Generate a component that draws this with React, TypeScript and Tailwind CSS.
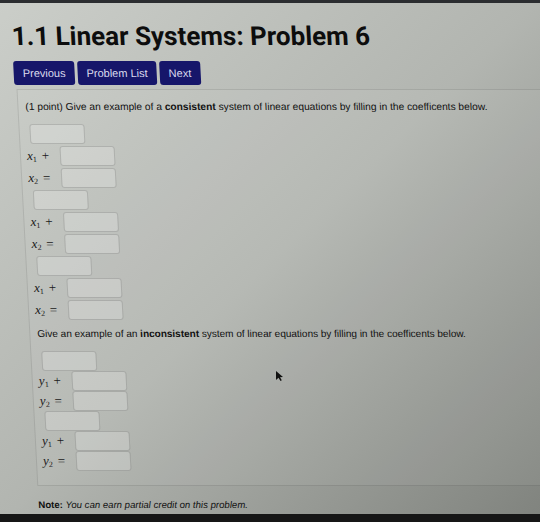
import React from 'react';

type Row = { kind: 'box' } | { kind: 'eq'; sub: string; op: string };

function Box() {
  return <div className="h-[20px] w-[55px] rounded-[3px] border border-black/15 bg-white/20" />;
}

function EqRow({ v, sub, op }: { v: string; sub: string; op: string }) {
  return (
    <div className="flex items-center">
      <div className="w-[33px] shrink-0 font-['Liberation_Serif',serif] text-[13px] text-[#1a1a1a]">
        <span className="italic">{v}</span>
        <sub className="text-[8px]">{sub}</sub>
        <span className="ml-[5px]">{op}</span>
      </div>
      <Box />
    </div>
  );
}

function System({ v, groups, gap }: { v: string; groups: number; gap: string }) {
  const rows: Row[] = [];
  for (let g = 0; g < groups; g++) {
    rows.push({ kind: 'box' }, { kind: 'eq', sub: '1', op: '+' }, { kind: 'eq', sub: '2', op: '=' });
  }
  return (
    <div className={`flex flex-col ${gap}`}>
      {rows.map((r, i) =>
        r.kind === 'box' ? (
          <div key={i} className="pl-[4px]">
            <Box />
          </div>
        ) : (
          <EqRow key={i} v={v} sub={r.sub} op={r.op} />
        )
      )}
    </div>
  );
}

export default function App() {
  return (
    <div className="relative flex h-[522px] w-[540px] flex-col overflow-hidden bg-linear-to-br from-[#cbcec9] via-[#b2b5b0] to-[#80837e] font-['Liberation_Sans',Arial,sans-serif] text-[#111]">
      <div className="h-[3px] bg-[#2b2d30]" />
      <div className="origin-top-left skew-x-3 pl-[10px]">
        <h1 className="pt-[18px] font-['Roboto',Arial,sans-serif] text-[26px] font-bold leading-[30px] text-[#0d0d0d]">
          1.1 Linear Systems: Problem 6
        </h1>
        <div className="mt-[10px] flex gap-[3px]">
          {['Previous', 'Problem List', 'Next'].map((b) => (
            <button
              key={b}
              className="h-[24px] rounded-[3px] bg-[#16166a] px-[9px] text-[11px] text-[#dcdcee]"
            >
              {b}
            </button>
          ))}
        </div>
        <div className="ml-[2px] mt-[4px] border border-black/10 bg-white/5 pb-[14px] pl-[6px] pt-[11px]">
          <p className="pl-[1px] text-[10.2px] leading-[12px]">
            (1 point) Give an example of a <b>consistent</b> system of linear equations by filling in the
            coefficents below.
          </p>
          <div className="mt-[11px]">
            <System v="x" groups={3} gap="gap-[2px]" />
          </div>
          <p className="mt-[8px] pl-[1px] text-[10px] leading-[12px]">
            Give an example of an <b>inconsistent</b> system of linear equations by filling in the
            coefficents below.
          </p>
          <div className="mt-[11px]">
            <System v="y" groups={2} gap="gap-0" />
          </div>
        </div>
        <p className="mt-[13px] pl-[2px] text-[9.6px] leading-[12px]">
          <b>Note:</b> <i>You can earn partial credit on this problem.</i>
        </p>
      </div>
      <div className="mt-auto h-[8px] bg-[#161616]" />
      {/* mouse pointer */}
      <svg className="absolute left-[275px] top-[370px]" width="9" height="12" viewBox="0 0 9 12">
        <path d="M1 1 L1 10 L3.5 7.8 L5.5 11 L6.8 10.3 L5 7.2 L8 7 Z" fill="#111" />
      </svg>
    </div>
  );
}
